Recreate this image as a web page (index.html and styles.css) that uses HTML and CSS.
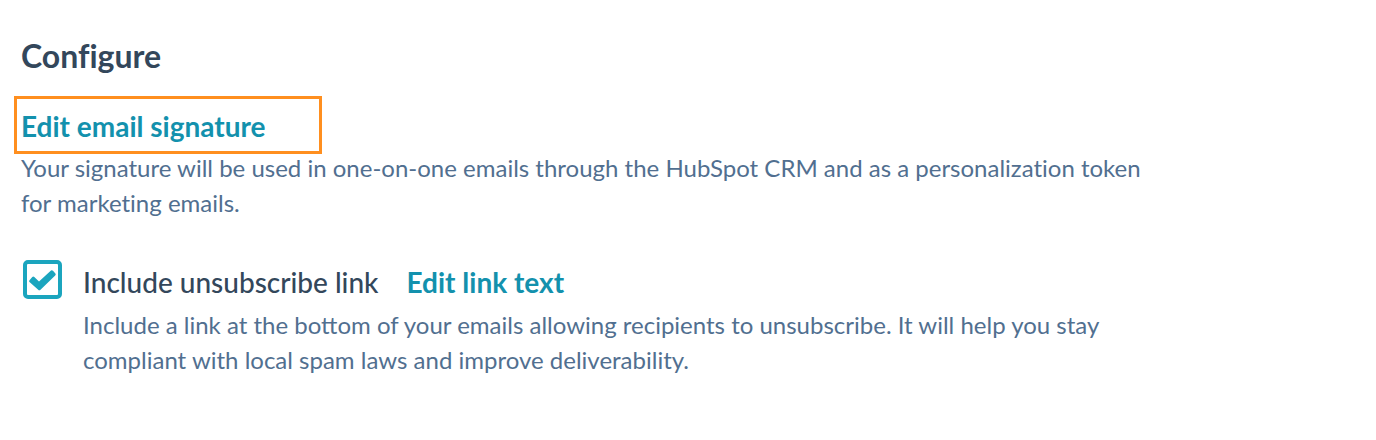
FILE: index.html
```html
<!DOCTYPE html>
<html lang="en">
<head>
<meta charset="utf-8">
<meta name="viewport" content="width=device-width, initial-scale=1">
<title>Configure</title>
<link rel="stylesheet" href="styles.css">
</head>
<body>
<main class="settings">
  <h1 class="title">Configure</h1>
  <section class="signature">
    <div class="highlight"><a class="link" href="#signature">Edit email signature</a></div>
    <p class="text">Your signature will be used in one-on-one emails through the HubSpot CRM and as a personalization token for marketing emails.</p>
  </section>
  <section class="option">
    <span class="check">
      <input class="check-input" type="checkbox" id="unsubscribe" aria-describedby="unsubscribe-help" checked>
      <svg class="check-mark" viewBox="0 0 39 39" aria-hidden="true"><path d="M6.5 20.2L9.3 17Q10.3 16 11.3 17L16 21.6L28 10.6Q29 9.8 30 10.8L32.4 13.4Q33.2 14.4 32.2 15.4L17.5 29.8Q16.3 30.8 15.2 29.8L6.5 22Q5.6 21.2 6.5 20.2Z" fill="currentColor"/></svg>
    </span>
    <div class="option-body">
      <div class="option-head">
        <label class="label" for="unsubscribe">Include unsubscribe link</label>
        <a class="link" href="#link-text">Edit link text</a>
      </div>
      <p class="text" id="unsubscribe-help">Include a link at the bottom of your emails allowing recipients to unsubscribe. It will help you stay compliant with local spam laws and improve deliverability.</p>
    </div>
  </section>
</main>
</body>
</html>
```
FILE: styles.css
```css
* { box-sizing: border-box; }
body {
  margin: 0;
  background: #fff;
  color: #33475b;
  font-family: "Avenir Next", Lato, sans-serif;
}
.settings { max-width: 1190px; padding: 36px 21px; }
.title {
  margin: 0 0 27px;
  font-size: 32px;
  line-height: 40px;
  font-weight: 700;
  font-variant-ligatures: none;
}
.signature { font-variant-ligatures: none; }
.highlight {
  width: fit-content;
  margin-bottom: 3px;
  padding: 5px 49px 3px 0;
  outline: 3px solid #ff8f1f;
  outline-offset: 4px;
}
.link {
  display: block;
  color: #1391ad;
  font-size: 28px;
  line-height: 36px;
  font-weight: 700;
  text-decoration: none;
}
.text { margin: 0; color: #516f90; font-size: 24px; line-height: 35px; }
.option { display: flex; gap: 21px; margin-top: 40px; padding-left: 2px; }
.check { position: relative; flex: none; width: 39px; height: 39px; }
.check-input {
  appearance: none;
  display: block;
  width: 39px;
  height: 39px;
  margin: 0;
  border: 4px solid #1ba5be;
  border-radius: 5px;
}
.check-mark { position: absolute; inset: 0; color: #1ba5be; pointer-events: none; }
.option-head { display: flex; align-items: center; gap: 28px; padding: 4px 0 7px; }
.label { font-size: 28px; line-height: 36px; font-weight: 500; }
```
